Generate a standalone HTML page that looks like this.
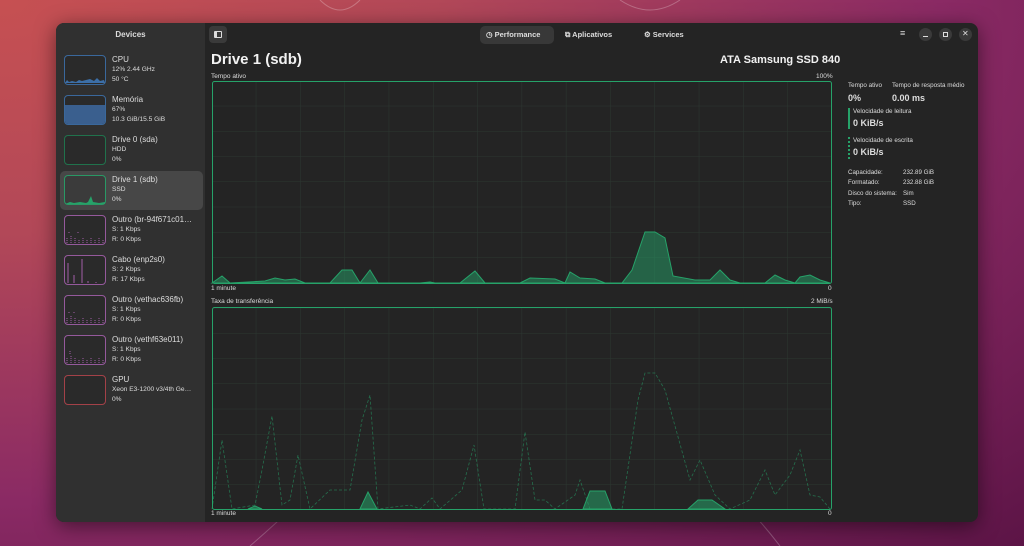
<!DOCTYPE html>
<html><head><meta charset="utf-8"><style>
*{margin:0;padding:0;box-sizing:border-box}
body{width:1024px;height:546px;overflow:hidden;font-family:"Liberation Sans",sans-serif;color:#ddd;
background:radial-gradient(ellipse at 0% 0%,#c65052 0%,#b24858 30%,#8a2a64 65%,#5c1446 100%);position:relative}
.win{position:absolute;left:56px;top:23px;width:922px;height:499px;background:#242424;border-radius:8px;overflow:hidden;box-shadow:0 4px 20px rgba(0,0,0,.5)}
.side{position:absolute;left:0;top:0;width:149px;height:499px;background:#303030}
.abs{position:absolute}
.t{position:absolute;font-size:6.6px;color:#ddd;white-space:nowrap}
.th{position:absolute;left:8px;width:42px;height:30px;border-radius:4px;border:1px solid;background:#2a2a2a;opacity:.9}
</style></head><body>
<svg class="abs" style="left:0;top:0" width="1024" height="546"><g fill="none" stroke="rgba(255,255,255,.25)" stroke-width="1"><path d="M320 0 Q340 20 360 0"/><path d="M620 0 Q650 20 680 0"/><path d="M250 546 Q280 520 300 500"/><path d="M740 500 Q760 520 780 546"/></g></svg>
<div class="win">
 <div class="side">
  <div class="t" style="left:0;width:149px;text-align:center;top:7px;font-size:8px;font-weight:bold">Devices</div>
  <div class="abs" style="left:4px;top:148px;width:143px;height:39px;background:#474747;border-radius:5px"></div>
  <div class="th" style="top:32px;border-color:#3c6fa8"></div>
  <svg class="abs" style="left:8px;top:32px" width="42" height="30"><path d="M1 28 L3 25 5 27 8 26 12 27 15 25 18 26 22 25 26 24 30 26 33 23 36 26 40 25 41 28 Z" fill="#3c6fa8"/></svg>
  <div class="t" style="left:56px;top:32px;font-size:8px">CPU</div><div class="t" style="left:56px;top:43px">12% 2.44 GHz</div><div class="t" style="left:56px;top:53px">50 °C</div>

  <div class="th" style="top:72px;border-color:#3c6fa8"></div>
  <div class="abs" style="left:9px;top:82px;width:40px;height:19px;background:#3a5f8e;border-radius:0 0 3px 3px"></div>
  <div class="t" style="left:56px;top:72px;font-size:8px">Memória</div><div class="t" style="left:56px;top:83px">67%</div><div class="t" style="left:56px;top:93px">10.3 GiB/15.5 GiB</div>

  <div class="th" style="top:112px;border-color:#1f7a50"></div>
  <div class="t" style="left:56px;top:112px;font-size:8px">Drive 0 (sda)</div><div class="t" style="left:56px;top:123px">HDD</div><div class="t" style="left:56px;top:133px">0%</div>

  <div class="th" style="top:152px;border-color:#26a269;background:#3a3a3a"></div>
  <svg class="abs" style="left:8px;top:152px" width="42" height="30"><path d="M1 29 L6 27 10 28 16 27 22 28 24 27 27 21 29 27 35 28 41 27 41 29Z" fill="#26a269"/></svg>
  <div class="t" style="left:56px;top:152px;font-size:8px">Drive 1 (sdb)</div><div class="t" style="left:56px;top:163px">SSD</div><div class="t" style="left:56px;top:173px">0%</div>

  <div class="th" style="top:192px;border-color:#a15ea8"></div>
  <svg class="abs" style="left:8px;top:192px" width="42" height="30" stroke="#a15ea8" stroke-dasharray="1 1"><path d="M3 28V22M7 28V20M11 28V23M15 28V24M19 28V22M23 28V24M27 28V23M31 28V25M35 28V22M39 28V24M5 17v2M14 17v2"/></svg>
  <div class="t" style="left:56px;top:192px;font-size:8px">Outro (br-94f671c01…</div><div class="t" style="left:56px;top:203px">S: 1 Kbps</div><div class="t" style="left:56px;top:213px">R: 0 Kbps</div>

  <div class="th" style="top:232px;border-color:#a15ea8"></div>
  <svg class="abs" style="left:8px;top:232px" width="42" height="30" stroke="#a15ea8"><path d="M4 28V8M10 28V20M18 28V4M24 28V26M32 28V27"/></svg>
  <div class="t" style="left:56px;top:232px;font-size:8px">Cabo (enp2s0)</div><div class="t" style="left:56px;top:243px">S: 2 Kbps</div><div class="t" style="left:56px;top:253px">R: 17 Kbps</div>

  <div class="th" style="top:272px;border-color:#a15ea8"></div>
  <svg class="abs" style="left:8px;top:272px" width="42" height="30" stroke="#a15ea8" stroke-dasharray="1 1"><path d="M3 28V22M7 28V20M11 28V23M15 28V24M19 28V22M23 28V24M27 28V23M31 28V25M35 28V22M39 28V24M5 17v2M10 17v2"/></svg>
  <div class="t" style="left:56px;top:272px;font-size:8px">Outro (vethac636fb)</div><div class="t" style="left:56px;top:283px">S: 1 Kbps</div><div class="t" style="left:56px;top:293px">R: 0 Kbps</div>

  <div class="th" style="top:312px;border-color:#a15ea8"></div>
  <svg class="abs" style="left:8px;top:312px" width="42" height="30" stroke="#a15ea8" stroke-dasharray="1 1"><path d="M3 28V22M7 28V20M11 28V23M15 28V24M19 28V22M23 28V24M27 28V23M31 28V25M35 28V22M39 28V24M6 16v3"/></svg>
  <div class="t" style="left:56px;top:312px;font-size:8px">Outro (vethf63e011)</div><div class="t" style="left:56px;top:323px">S: 1 Kbps</div><div class="t" style="left:56px;top:333px">R: 0 Kbps</div>

  <div class="th" style="top:352px;border-color:#b0434b"></div>
  <div class="t" style="left:56px;top:352px;font-size:8px">GPU</div><div class="t" style="left:56px;top:363px">Xeon E3-1200 v3/4th Ge…</div><div class="t" style="left:56px;top:373px">0%</div>
 </div>
 <div class="abs" style="left:153px;top:3px;width:18px;height:17px;background:#3a3a3a;border-radius:4px"></div>
 <div class="abs" style="left:158px;top:8px;width:8px;height:7px;border:1px solid #ddd;border-radius:1px;border-left-width:3px"></div>
 <div class="abs" style="left:424px;top:3px;width:74px;height:18px;background:#383838;border-radius:5px"></div>
 <div class="t" style="left:430px;top:7px;font-size:7.5px;font-weight:bold">◷ Performance</div>
 <div class="t" style="left:509px;top:7px;font-size:7.5px;font-weight:bold">⧉ Aplicativos</div>
 <div class="t" style="left:588px;top:7px;font-size:7.5px;font-weight:bold">⚙ Services</div>
 <div class="t" style="left:844px;top:5px;font-size:9px">≡</div>
 <div class="abs" style="left:863px;top:5px;width:13px;height:13px;border-radius:50%;background:#3a3a3a"></div>
 <div class="abs" style="left:883px;top:5px;width:13px;height:13px;border-radius:50%;background:#3a3a3a"></div>
 <div class="abs" style="left:903px;top:5px;width:13px;height:13px;border-radius:50%;background:#3a3a3a"></div>
 <div class="abs" style="left:867px;top:13px;width:5px;height:1px;background:#ddd"></div>
 <div class="abs" style="left:887px;top:9px;width:5px;height:5px;border:1px solid #ddd"></div>
 <div class="t" style="left:906px;top:6px;font-size:8px">✕</div>

 <div class="t" style="left:155px;top:28px;font-size:15px;font-weight:bold;color:#f2f2f2">Drive 1 (sdb)</div>
 <div class="t" style="left:664px;top:31px;font-size:11px;font-weight:bold;color:#f2f2f2">ATA Samsung SSD 840</div>
 <div class="t" style="left:155px;top:50px;font-size:6.5px">Tempo ativo</div>
 <div class="t" style="left:760px;top:50px;font-size:6.5px">100%</div>
 <div class="t" style="left:155px;top:262px;font-size:6.5px">1 minute</div>
 <div class="t" style="left:772px;top:262px;font-size:6.5px">0</div>
 <div class="t" style="left:155px;top:275px;font-size:6.5px">Taxa de transferência</div>
 <div class="t" style="left:755px;top:275px;font-size:6.5px">2 MiB/s</div>
 <div class="t" style="left:155px;top:487px;font-size:6.5px">1 minute</div>
 <div class="t" style="left:772px;top:487px;font-size:6.5px">0</div>

 <div class="t" style="left:792px;top:59px;font-size:6.3px">Tempo ativo</div>
 <div class="t" style="left:836px;top:59px;font-size:6.3px">Tempo de resposta médio</div>
 <div class="t" style="left:792px;top:70px;font-size:9px;font-weight:bold">0%</div>
 <div class="t" style="left:836px;top:70px;font-size:9px;font-weight:bold">0.00 ms</div>
 <div class="abs" style="left:792px;top:85px;width:2px;height:21px;background:#26a269"></div>
 <div class="t" style="left:797px;top:85px;font-size:6.3px">Velocidade de leitura</div>
 <div class="t" style="left:797px;top:95px;font-size:9px;font-weight:bold">0 KiB/s</div>
 <div class="abs" style="left:792px;top:114px;width:0;height:22px;border-left:2px dotted #26a269"></div>
 <div class="t" style="left:797px;top:114px;font-size:6.3px">Velocidade de escrita</div>
 <div class="t" style="left:797px;top:124px;font-size:9px;font-weight:bold">0 KiB/s</div>
 <div class="t" style="left:792px;top:146px;font-size:6.2px">Capacidade:</div><div class="t" style="left:847px;top:146px;font-size:6.2px">232.89 GiB</div>
 <div class="t" style="left:792px;top:156px;font-size:6.2px">Formatado:</div><div class="t" style="left:847px;top:156px;font-size:6.2px">232.88 GiB</div>
 <div class="t" style="left:792px;top:167px;font-size:6.2px">Disco do sistema:</div><div class="t" style="left:847px;top:167px;font-size:6.2px">Sim</div>
 <div class="t" style="left:792px;top:177px;font-size:6.2px">Tipo:</div><div class="t" style="left:847px;top:177px;font-size:6.2px">SSD</div>
</div>
<svg class="abs" style="left:0;top:0" width="1024" height="546">
 <defs><pattern id="g" x="212" y="81" width="44.3" height="25.25" patternUnits="userSpaceOnUse"><path d="M44.3 0V25.25M0 25.25H44.3" stroke="#2c3731" stroke-width="1" fill="none"/></pattern></defs>
 <rect x="212.5" y="81.5" width="619" height="202" fill="url(#g)" stroke="#26a269" rx="2"/>
 <rect x="212.5" y="307.5" width="619" height="202" fill="url(#g)" stroke="#26a269" rx="2"/>
 <path d="M212 283L222 276 230 283 265 281 275 278 285 280 295 279 305 283 330 283 342 270 352 270 360 283 370 270 378 283 420 283 430 282 435 283 460 283 475 271 485 283 520 283 530 278 555 279 565 283 570 272 580 278 595 279 605 283 622 283 632 270 645 232 655 232 665 238 673 276 695 280 710 280 720 270 730 280 740 283 765 283 775 275 785 280 795 283 800 277 810 275 820 280 830 283Z" fill="#26a269" fill-opacity=".5" stroke="#26a269"/>
 <path d="M248 509L255 506 262 509ZM360 509L368 492 377 509ZM583 509L590 491 605 491 612 509ZM688 509L698 500 712 500 725 509Z" fill="#26a269" fill-opacity=".55" stroke="#26a269"/>
 <path d="M212 509L222 440 232 509 255 505 262 470 272 416 282 505 290 500 298 455 310 509 330 490 350 490 362 420 370 395 378 509 410 505 420 509 432 498 440 509 462 490 474 445 484 509 515 509 525 432 535 500 545 500 555 509 575 495 580 480 590 509 622 509 638 400 645 373 655 373 665 390 690 480 700 460 715 495 730 509 750 500 765 470 775 495 790 475 800 450 810 495 820 497 830 509" fill="none" stroke="#26a269" stroke-opacity=".6" stroke-width=".8" stroke-dasharray="3 2"/>
</svg>
</body></html>
